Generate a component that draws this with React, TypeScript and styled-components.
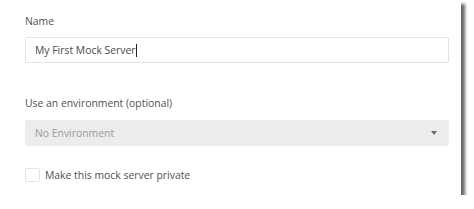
import React from "react";
import styled, { createGlobalStyle } from "styled-components";

const Global = createGlobalStyle`
  html, body { margin: 0; padding: 0; background: #ffffff; }
  body { font-family: "Open Sans", "Noto Sans", sans-serif; }
`;

const Panel = styled.div`
  box-sizing: border-box;
  width: 461px;
  height: 195px;
  background: #ffffff;
  box-shadow: 4px 4px 3px rgba(0, 0, 0, 0.6);
  padding: 13px 12px 0 25px;
  display: flex;
  flex-direction: column;
`;

const Label = styled.div<{ $top?: number }>`
  font-size: 10.4px;
  line-height: 16px;
  color: #505050;
  margin-top: ${(p) => p.$top ?? 0}px;
`;

const Input = styled.div`
  box-sizing: border-box;
  margin-top: 8px;
  height: 26px;
  border: 1px solid #e2e2e2;
  border-radius: 2px;
  display: flex;
  align-items: center;
  padding-left: 9px;
  font-size: 10.4px;
  color: #4a4a4a;
`;

const Caret = styled.span`
  display: inline-block;
  width: 1px;
  height: 13px;
  background: #222;
`;

const Select = styled.div`
  box-sizing: border-box;
  margin-top: 9px;
  height: 26px;
  background: #ececec;
  border-radius: 2px;
  display: flex;
  align-items: center;
  justify-content: space-between;
  padding: 0 12px 0 10px;
  font-size: 10.4px;
  color: #9b9b9b;
`;

const Arrow = styled.span`
  width: 0;
  height: 0;
  border-left: 3.5px solid transparent;
  border-right: 3.5px solid transparent;
  border-top: 4px solid #6a6a6a;
`;

const CheckRow = styled.div`
  margin-top: 22px;
  display: flex;
  align-items: center;
  gap: 5px;
  font-size: 10.4px;
  color: #505050;
`;

const Box = styled.span`
  box-sizing: border-box;
  width: 15px;
  height: 14px;
  border: 1px solid #e4e4e4;
  border-radius: 2px;
  background: #fff;
`;

export default function App() {
  return (
    <>
      <Global />
      <Panel>
        <Label>Name</Label>
        <Input>
          My First Mock Server
          <Caret />
        </Input>
        <Label $top={32}>Use an environment (optional)</Label>
        <Select>
          <span>No Environment</span>
          <Arrow />
        </Select>
        <CheckRow>
          <Box />
          <span>Make this mock server private</span>
        </CheckRow>
      </Panel>
    </>
  );
}
